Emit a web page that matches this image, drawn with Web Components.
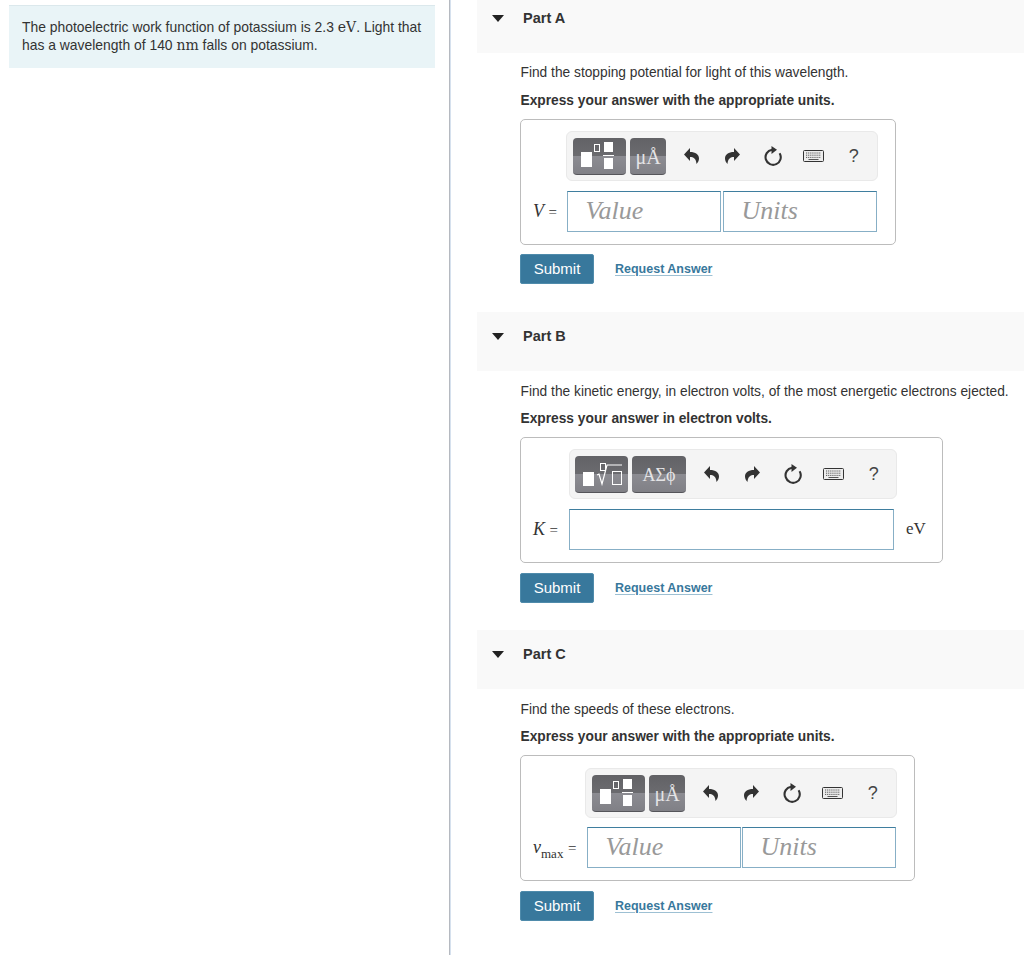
<!DOCTYPE html>
<html lang="en">
<head>
<meta charset="utf-8">
<title>Photoelectric work function</title>
<style>
  html, body { margin: 0; padding: 0; background: #fff; }
  body { font-family: "Liberation Sans", Arial, sans-serif; font-size: 13.75px; color: #333; height: 955px; overflow: hidden; }
</style>
</head>
<body>
<problem-layout>
  <statement-panel slot="left">The photoelectric work function of potassium is 2.3 <math-text>eV</math-text>. Light that<br>has a wavelength of 140 <math-text>nm</math-text> falls on potassium.</statement-panel>

  <part-section title="Part A" first
    prompt="Find the stopping potential for light of this wavelength."
    hint="Express your answer with the appropriate units.">
    <answer-box style="--box-width:376px;--label-width:34px;--toolbar-shift:-1px;--top-pad:11px;--row-gap:10px">
      <span slot="label"><i>V</i> <small>=</small></span>
      <math-toolbar slot="toolbar" kind="units"></math-toolbar>
      <field-box placeholder="Value" style="width:154px"></field-box>
      <field-box placeholder="Units" style="width:154px;margin-left:2px"></field-box>
    </answer-box>
  </part-section>

  <part-section title="Part B"
    prompt="Find the kinetic energy, in electron volts, of the most energetic electrons ejected."
    hint="Express your answer in electron volts.">
    <answer-box style="--box-width:423px;--label-width:36px;--toolbar-shift:0px;--top-pad:11px;--row-gap:10px">
      <span slot="label"><i>K</i> <small>=</small></span>
      <math-toolbar slot="toolbar" kind="symbols"></math-toolbar>
      <field-box style="width:325px"></field-box>
      <span class="unit" style="font-family:'Liberation Serif',serif;font-size:17px;color:#333;margin-left:12px;position:relative;top:-1px">eV</span>
    </answer-box>
  </part-section>

  <part-section title="Part C"
    prompt="Find the speeds of these electrons."
    hint="Express your answer with the appropriate units.">
    <answer-box style="--box-width:395px;--label-width:54px;--toolbar-shift:-2px;--top-pad:12px;--row-gap:9px">
      <span slot="label"><i>v</i><sub style="font-size:13px;line-height:0">max</sub> <small>=</small></span>
      <math-toolbar slot="toolbar" kind="units"></math-toolbar>
      <field-box placeholder="Value" style="width:154px"></field-box>
      <field-box placeholder="Units" style="width:154px;margin-left:1px"></field-box>
    </answer-box>
  </part-section>
</problem-layout>

<script>
  // Two column page: statement on the left, parts on the right
  class ProblemLayout extends HTMLElement {
    constructor() {
      super();
      this.attachShadow({ mode: 'open' });
      this.shadowRoot.innerHTML = `
        <style>
          :host { display: grid; grid-template-columns: 451px 1fr; height: 955px; }
          .left {
            border-right: 1px solid #d6e1ee;
            box-shadow: inset -1px 0 0 #b5b9c0;
            box-sizing: border-box;
            padding: 5px 15px 0 9px;
          }
          .right { padding-left: 26px; }
        </style>
        <div class="left"><slot name="left"></slot></div>
        <div class="right"><slot></slot></div>
      `;
    }
  }

  class StatementPanel extends HTMLElement {
    constructor() {
      super();
      this.attachShadow({ mode: 'open' });
      this.shadowRoot.innerHTML = `
        <style>
          :host {
            display: block;
            background: #e9f4f7;
            border-top: 1px solid #dbe8ec;
            padding: 13px 13px 14px;
            font-size: 13.9px;
            line-height: 17.5px;
            color: #333;
            white-space: nowrap;
          }
        </style>
        <slot></slot>
      `;
    }
  }

  class MathText extends HTMLElement {
    constructor() {
      super();
      this.attachShadow({ mode: 'open' });
      // no whitespace around the slot, it would render as a space in the sentence
      this.shadowRoot.innerHTML = '<style>:host { display: inline; font-family: "DejaVu Serif", "Liberation Serif", serif; font-size: 14px; }</style><slot></slot>';
    }
  }

  class PartSection extends HTMLElement {
    constructor() {
      super();
      this.attachShadow({ mode: 'open' });
    }

    connectedCallback() {
      const first = this.hasAttribute('first');
      this.shadowRoot.innerHTML = `
        <style>
          :host { display: block; margin-bottom: ${first ? 28 : 27}px; }
          header {
            display: flex;
            align-items: flex-start;
            height: ${first ? 53 : 59}px;
            padding-top: ${first ? 9 : 15}px;
            box-sizing: border-box;
            background: #f9f9f9;
            font-weight: bold;
            font-size: 14.5px;
            line-height: 18px;
            color: #333;
          }
          .arrow {
            width: 0; height: 0;
            margin: 6px 0 0 15px;
            border-left: 6px solid transparent;
            border-right: 6px solid transparent;
            border-top: 7px solid #222;
          }
          h3 { all: unset; margin-left: 19px; }
          .body { padding-left: 43.5px; }
          .prompt { line-height: 20px; margin-top: ${first ? 10 : 11}px; }
          .hint { font-weight: bold; line-height: 20px; margin-top: ${first ? 8 : 7}px; margin-bottom: 8px; }
          .actions { display: flex; align-items: center; margin-top: ${first ? 9 : 10}px; margin-left: -0.5px; }
          .submit {
            width: 74px; height: 30px;
            box-sizing: border-box;
            background: #38789c;
            border: 1px solid #4f8bab;
            border-radius: 2px;
            color: #fff;
            font: 15px/28px "Liberation Sans", Arial, sans-serif;
            text-align: center;
          }
          .request {
            margin-left: 21px;
            font-size: 12.5px;
            font-weight: bold;
            color: #38789c;
            text-decoration: underline;
            text-decoration-color: #9dc0d3;
            text-underline-offset: 2px;
          }
        </style>
        <header>
          <span class="arrow"></span>
          <h3>${this.getAttribute('title')}</h3>
        </header>
        <div class="body">
          <div class="prompt">${this.getAttribute('prompt')}</div>
          <div class="hint">${this.getAttribute('hint')}</div>
          <slot></slot>
          <div class="actions">
            <span class="submit">Submit</span>
            <span class="request">Request Answer</span>
          </div>
        </div>
      `;
    }
  }

  class AnswerBox extends HTMLElement {
    constructor() {
      super();
      this.attachShadow({ mode: 'open' });
      this.shadowRoot.innerHTML = `
        <style>
          :host {
            display: block;
            width: var(--box-width);
            height: 126px;
            box-sizing: border-box;
            margin-left: -0.5px;
            border: 1px solid #bcbcbc;
            border-radius: 5px;
            padding: var(--top-pad) 0 0 12px;
            font-family: "Liberation Serif", serif;
            font-size: 18px;
            color: #333;
          }
          .tools { margin-left: calc(var(--label-width) + var(--toolbar-shift)); }
          .row { display: flex; align-items: center; margin-top: var(--row-gap); }
          .label { width: var(--label-width); flex: none; white-space: nowrap; }
        </style>
        <div class="tools"><slot name="toolbar"></slot></div>
        <div class="row">
          <div class="label"><slot name="label"></slot></div>
          <slot></slot>
        </div>
      `;
    }
  }

  class FieldBox extends HTMLElement {
    constructor() {
      super();
      this.attachShadow({ mode: 'open' });
    }

    connectedCallback() {
      const text = this.getAttribute('placeholder') || '';
      this.shadowRoot.innerHTML = `
        <style>
          :host {
            display: block;
            flex: none;
            height: 41px;
            box-sizing: border-box;
            border: 1px solid #87afc6;
            border-top-color: #3f7e9f;
            background: #fff;
            padding-left: 17.5px;
            font: italic 26px/37px "Liberation Serif", serif;
            color: #999;
          }
        </style>
        ${text}
      `;
    }
  }

  // The grey template buttons and the undo / redo / reset / keyboard / help icons
  class MathToolbar extends HTMLElement {
    constructor() {
      super();
      this.attachShadow({ mode: 'open' });
    }

    connectedCallback() {
      const units = this.getAttribute('kind') === 'units';
      const firstIcon = units ? `
        <rect x="8" y="14" width="11" height="15" fill="#fff"/>
        <rect x="21.5" y="6.5" width="5" height="7" fill="none" stroke="#fff"/>
        <rect x="31" y="4" width="9" height="10" fill="#fff"/>
        <rect x="30" y="17" width="11" height="1" fill="#fff"/>
        <rect x="31" y="20" width="9" height="11" fill="#fff"/>
      ` : `
        <rect x="8" y="16" width="11" height="14" fill="#fff"/>
        <rect x="25.5" y="7.5" width="5" height="7" fill="none" stroke="#fff"/>
        <path d="M22 19l2-1 3 10 5-19h15" fill="none" stroke="#fff" stroke-width="1.2"/>
        <rect x="37.5" y="15.5" width="9" height="13" fill="none" stroke="#fff"/>
      `;
      this.shadowRoot.innerHTML = `
        <style>
          :host {
            display: flex;
            align-items: center;
            box-sizing: border-box;
            width: ${units ? 312 : 328}px;
            height: 50px;
            padding-left: ${units ? 6 : 5}px;
            background: #f4f4f4;
            border: 1px solid #e9e9e9;
            border-radius: 6px;
          }
          .btn {
            flex: none;
            height: 37px;
            margin-right: 4px;
            border-radius: 4px;
            border-bottom: 1px solid #55555a;
            box-sizing: border-box;
            background: linear-gradient(#626266 0, #6b6b6f 49%, #8c8c92 50%, #808086 100%);
            display: flex;
            align-items: center;
            justify-content: center;
            font-family: "Liberation Serif", serif;
            color: #e4e4e6;
            overflow: hidden;
          }
          .b1 { width: 53px; }
          .b2 { width: ${units ? 36 : 54}px; font-size: ${units ? 20 : 18}px; padding-top: 3px; margin-right: 2px; }
          .cell { flex: none; width: 40.5px; display: flex; justify-content: center; }
          .spacer { flex: none; width: 3.5px; }
          .help { font: 18px "Liberation Sans", Arial, sans-serif; color: #444; }
          svg { display: block; }
        </style>
        <div class="btn b1"><svg width="53" height="36" viewBox="0 0 53 36">${firstIcon}</svg></div>
        <div class="btn b2">${units ? 'μÅ' : 'ΑΣϕ'}</div>
        <div class="spacer"></div>
        <div class="cell"><svg width="15" height="16" viewBox="0 0 15 16"><path d="M6 0L0 6.5 6 13V9C9.5 9 12 10.5 12.5 16 14 14.5 15 12.5 15 10.5 15 6.5 11.5 4 6 4z" fill="#333"/></svg></div>
        <div class="cell"><svg width="15" height="16" viewBox="0 0 15 16"><path d="M9 0l6 6.5L9 13V9C5.5 9 3 10.5 2.5 16 1 14.5 0 12.5 0 10.5 0 6.5 3.5 4 9 4z" fill="#333"/></svg></div>
        <div class="cell"><svg width="20" height="20" viewBox="0 0 20 20" style="margin-left:2px"><path d="M15.6 7.2A7.6 7.6 0 1 1 8 3.7" fill="none" stroke="#333" stroke-width="2.1"/><path d="M7.5 0L13 3.7 7.5 8z" fill="#333"/></svg></div>
        <div class="cell"><svg width="21" height="12" viewBox="0 0 21 12">
          <rect x="0.5" y="0.5" width="20" height="11" rx="1" fill="#ececec" stroke="#333"/>
          <path d="M3 3h15M3 5.2h15M3 7.4h15" stroke="#555" stroke-dasharray="1.2 .9"/>
          <path d="M5.5 9.5h10" stroke="#555"/>
        </svg></div>
        <div class="cell help">?</div>
      `;
    }
  }

  customElements.define('problem-layout', ProblemLayout);
  customElements.define('statement-panel', StatementPanel);
  customElements.define('math-text', MathText);
  customElements.define('part-section', PartSection);
  customElements.define('answer-box', AnswerBox);
  customElements.define('field-box', FieldBox);
  customElements.define('math-toolbar', MathToolbar);
</script>
</body>
</html>
